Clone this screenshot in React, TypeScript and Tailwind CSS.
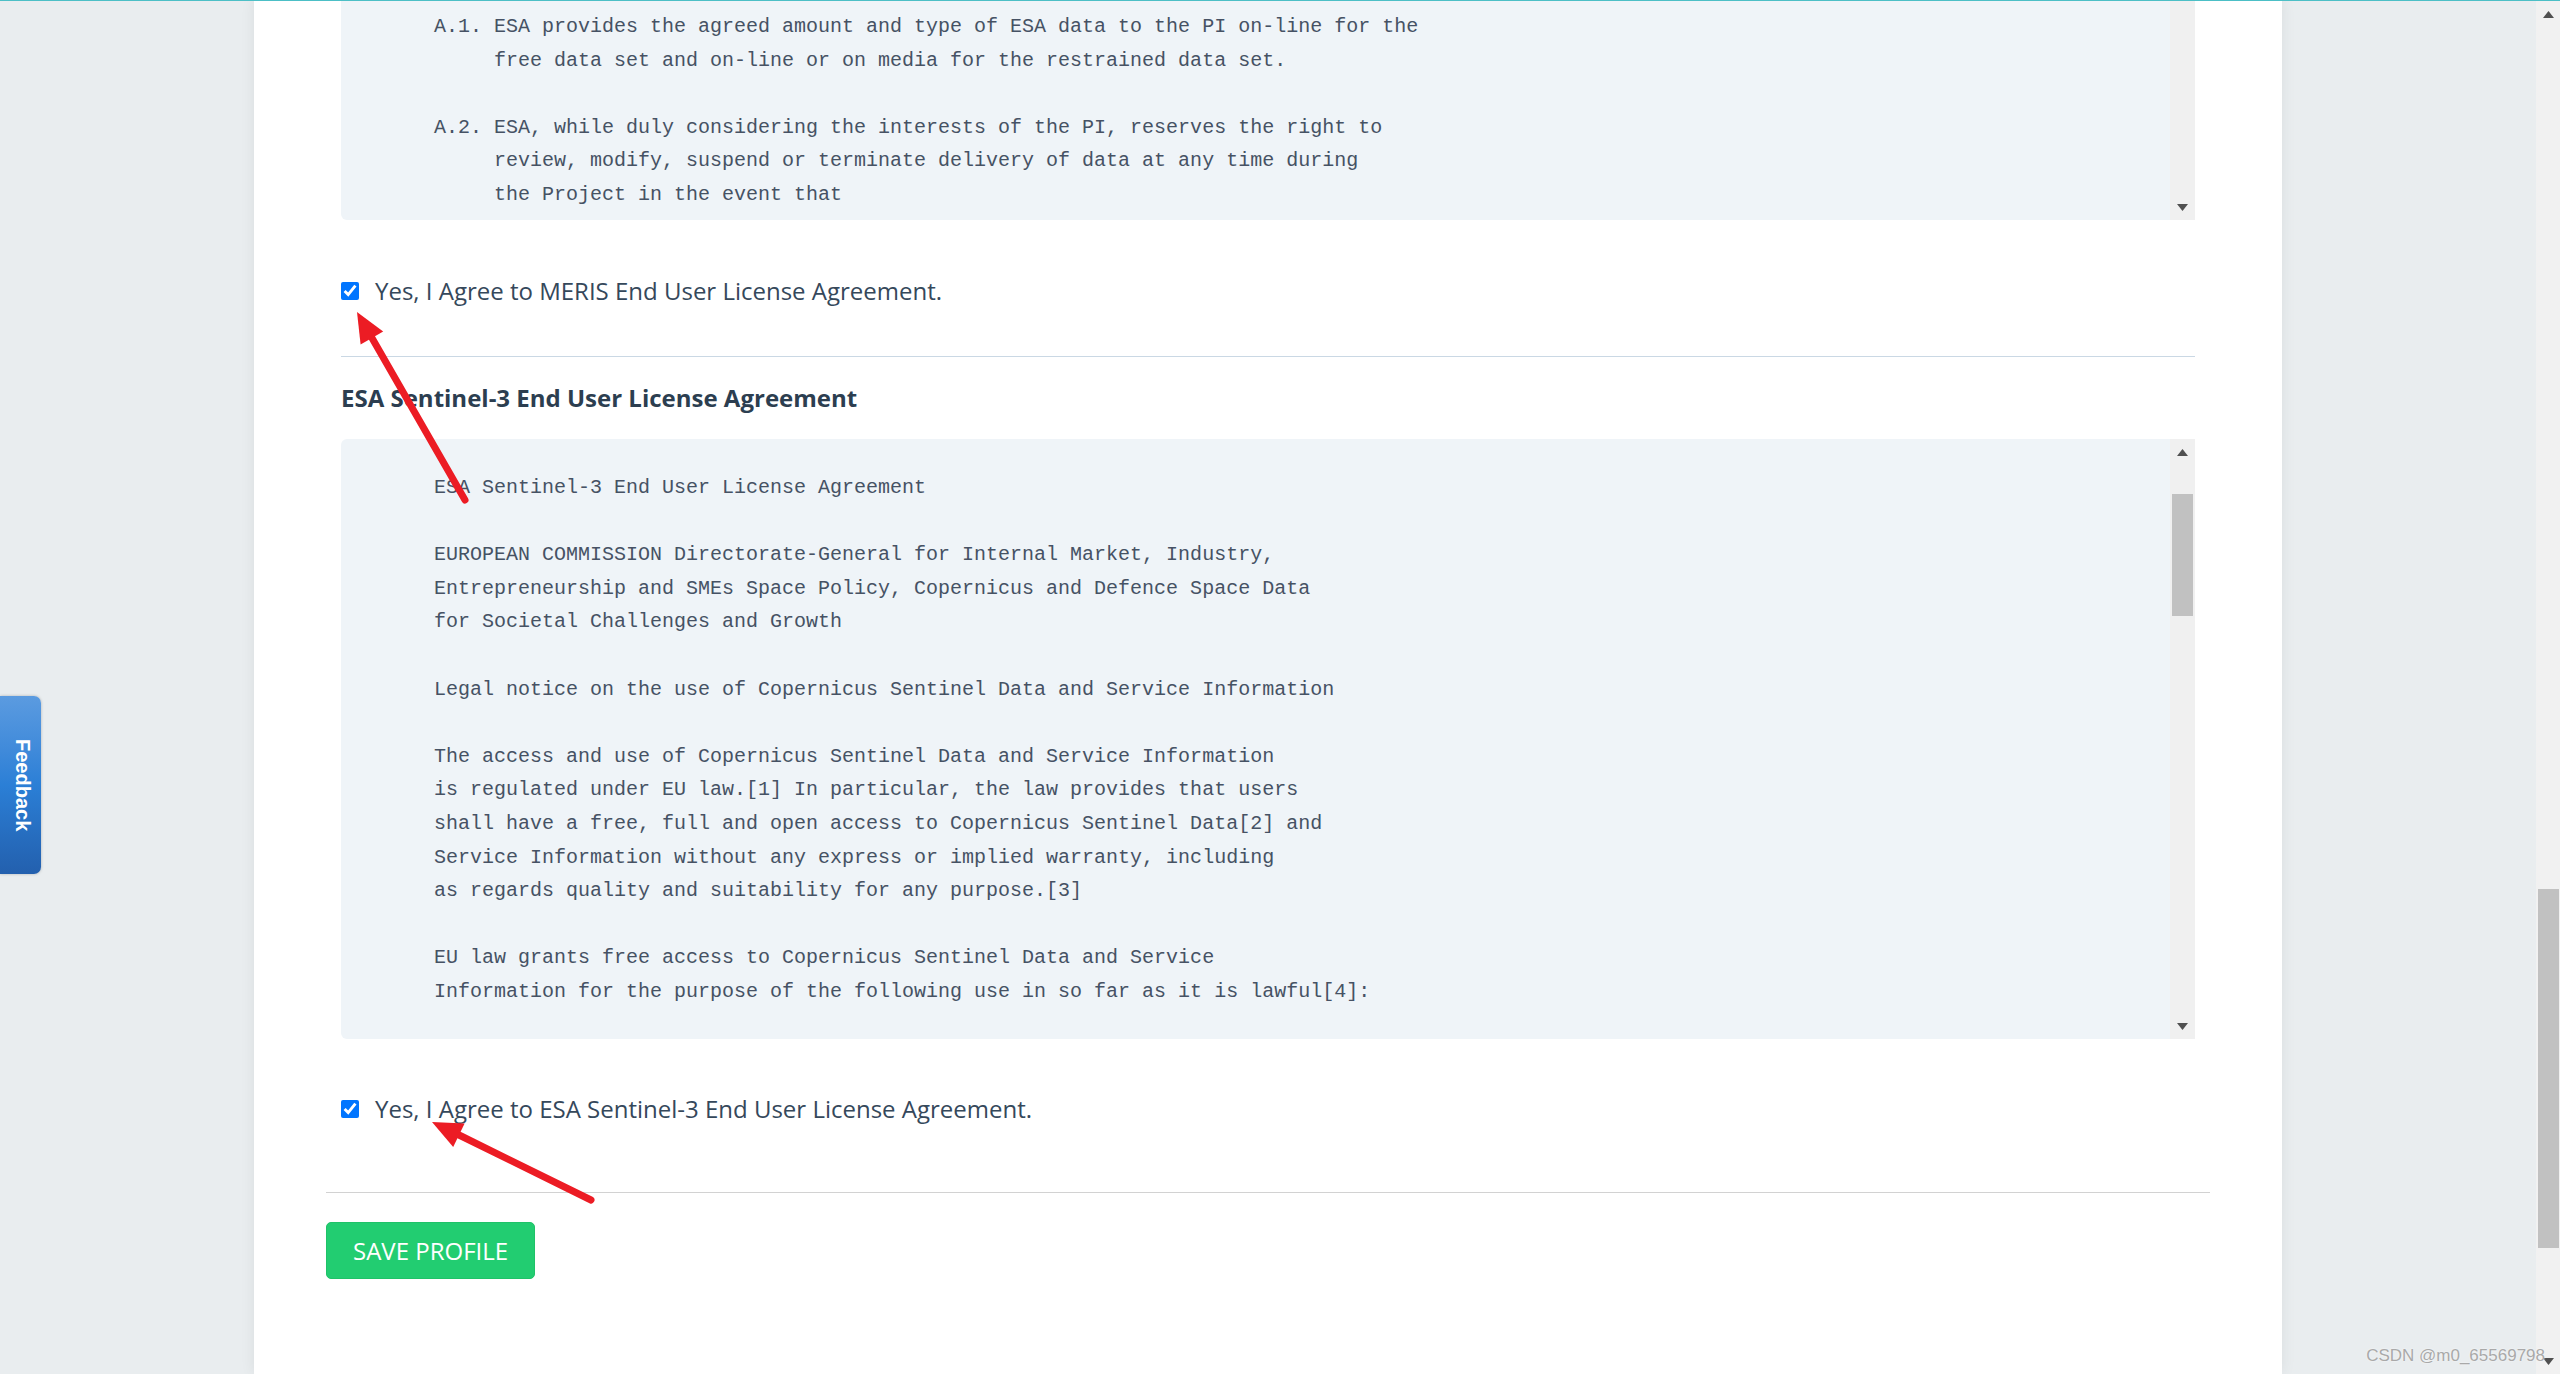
import React from "react";

const TA1 = [
  "A.1. ESA provides the agreed amount and type of ESA data to the PI on-line for the",
  "     free data set and on-line or on media for the restrained data set.",
  "",
  "A.2. ESA, while duly considering the interests of the PI, reserves the right to",
  "     review, modify, suspend or terminate delivery of data at any time during",
  "     the Project in the event that",
];

const TA2 = [
  "ESA Sentinel-3 End User License Agreement",
  "",
  "EUROPEAN COMMISSION Directorate-General for Internal Market, Industry,",
  "Entrepreneurship and SMEs Space Policy, Copernicus and Defence Space Data",
  "for Societal Challenges and Growth",
  "",
  "Legal notice on the use of Copernicus Sentinel Data and Service Information",
  "",
  "The access and use of Copernicus Sentinel Data and Service Information",
  "is regulated under EU law.[1] In particular, the law provides that users",
  "shall have a free, full and open access to Copernicus Sentinel Data[2] and",
  "Service Information without any express or implied warranty, including",
  "as regards quality and suitability for any purpose.[3]",
  "",
  "EU law grants free access to Copernicus Sentinel Data and Service",
  "Information for the purpose of the following use in so far as it is lawful[4]:",
];

function UpTri() {
  return (
    <svg width="11" height="7" viewBox="0 0 11 7">
      <polygon points="5.5,0 11,7 0,7" fill="#505050" />
    </svg>
  );
}
function DownTri() {
  return (
    <svg width="11" height="7" viewBox="0 0 11 7">
      <polygon points="0,0 11,0 5.5,7" fill="#505050" />
    </svg>
  );
}

function Lines({ lines }: { lines: string[] }) {
  return (
    <>
      {lines.map((l, i) => (
        <div key={i} className="h-[33.6px] whitespace-pre">
          {l}
        </div>
      ))}
    </>
  );
}

function AgreeRow({ text, className }: { text: string; className: string }) {
  return (
    <label className={"flex items-center h-[36px] " + className}>
      <input
        type="checkbox"
        defaultChecked
        className="m-0 w-[18px] h-[18px] accent-[#0075ff] shrink-0"
      />
      <span className="ml-[16px] text-[24px] leading-[36px] text-[#35485b]">{text}</span>
    </label>
  );
}

export default function App() {
  return (
    <div className="relative w-full h-[1374px] overflow-hidden bg-[#e9edef] flex font-['Open_Sans',sans-serif]">
      {/* main page area */}
      <main className="flex-1 flex justify-center">
        <div className="w-[2028px] h-full bg-white shadow-[0_0_14px_rgba(0,0,0,0.07)] px-[72px]">
          <div className="px-[15px]">
            {/* textarea 1 (scrolled) */}
            <div className="flex h-[220px]">
              <div className="flex-1 bg-[#eff4f8] rounded-bl-[6px] overflow-hidden pt-[10px] pl-[93px] font-['Liberation_Mono',monospace] text-[20px] leading-[33.6px] text-[#465264]">
                <Lines lines={TA1} />
              </div>
              <div className="w-[25px] bg-[#f0f0f0] flex flex-col justify-end">
                <div className="h-[26px] flex items-center justify-center">
                  <DownTri />
                </div>
              </div>
            </div>

            <AgreeRow className="mt-[53px]" text="Yes, I Agree to MERIS End User License Agreement." />

            <div className="mt-[47px] h-px bg-[#cad8e4]" />

            <h3 className="mt-[24px] text-[24px] leading-[34px] font-bold text-[#2c3e50]">
              ESA Sentinel-3 End User License Agreement
            </h3>

            {/* textarea 2 */}
            <div className="mt-[24px] flex h-[600px]">
              <div className="flex-1 bg-[#eff4f8] rounded-l-[6px] overflow-hidden pt-[32px] pl-[93px] font-['Liberation_Mono',monospace] text-[20px] leading-[33.6px] text-[#465264]">
                <Lines lines={TA2} />
              </div>
              <div className="w-[25px] bg-[#f0f0f0] flex flex-col">
                <div className="h-[26px] flex items-center justify-center">
                  <UpTri />
                </div>
                <div className="mt-[29px] mx-[2px] h-[122px] bg-[#c1c1c1]" />
                <div className="flex-1" />
                <div className="h-[26px] flex items-center justify-center">
                  <DownTri />
                </div>
              </div>
            </div>

            <AgreeRow className="mt-[52px]" text="Yes, I Agree to ESA Sentinel-3 End User License Agreement." />
          </div>

          <div className="mt-[65px] h-px bg-[#d2d2d2]" />

          <button className="mt-[29px] h-[57px] px-[26px] rounded-[5px] border border-[#1fc268] bg-[#22cd71] text-white text-[24px] leading-none">
            SAVE PROFILE
          </button>
        </div>
      </main>

      {/* page scrollbar */}
      <div className="w-[24px] bg-[#f1f1f1] flex flex-col">
        <div className="h-[25px] flex items-center justify-center pt-[3px]">
          <UpTri />
        </div>
        <div className="mt-[864px] ml-[2px] mr-[1px] h-[359px] bg-[#c1c1c1]" />
        <div className="flex-1" />
        <div className="h-[25px] flex items-center justify-center">
          <DownTri />
        </div>
      </div>

      {/* top accent line */}
      <div className="absolute top-0 left-0 right-0 h-px bg-[#4cbfc6]" />

      {/* feedback tab */}
      <div className="absolute left-0 top-[696px] w-[41px] h-[178px] rounded-r-[7px] bg-gradient-to-b from-[#5b9be0] via-[#2b7fd6] to-[#2360ae] shadow-[0_0_3px_rgba(0,0,0,0.25)] flex items-center justify-center pl-[5px]">
        <span className="[writing-mode:vertical-rl] text-white font-bold text-[20px] font-['Liberation_Sans',sans-serif] leading-none">
          Feedback
        </span>
      </div>

      {/* annotation arrows */}
      <svg
        className="absolute inset-0 pointer-events-none"
        width="2560"
        height="1374"
        viewBox="0 0 2560 1374"
      >
        <line x1="372" y1="338" x2="465" y2="500" stroke="#ec1c24" strokeWidth="7" strokeLinecap="round" />
        <polygon points="357,312 383.2,331.5 360.6,344.5" fill="#ec1c24" />
        <line x1="459" y1="1135" x2="591" y2="1200" stroke="#ec1c24" strokeWidth="7" strokeLinecap="round" />
        <polygon points="432,1122 464.6,1123.5 453.2,1146.9" fill="#ec1c24" />
      </svg>

      {/* watermark */}
      <div className="absolute right-[15px] bottom-[8px] text-[17px] leading-[20px] text-[#a9a9a9] font-['Liberation_Sans',sans-serif] [text-shadow:0_0_2px_rgba(255,255,255,0.9)]">
        CSDN @m0_65569798
      </div>
    </div>
  );
}
